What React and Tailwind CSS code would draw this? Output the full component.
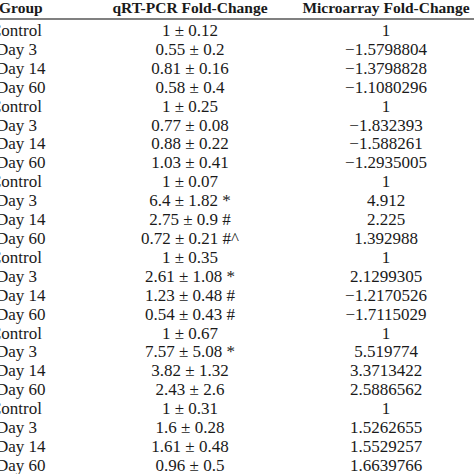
import React from "react";

const rows = [
  ["Control", "1 ± 0.12", "1"],
  ["Day 3", "0.55 ± 0.2", "−1.5798804"],
  ["Day 14", "0.81 ± 0.16", "−1.3798828"],
  ["Day 60", "0.58 ± 0.4", "−1.1080296"],
  ["Control", "1 ± 0.25", "1"],
  ["Day 3", "0.77 ± 0.08", "−1.832393"],
  ["Day 14", "0.88 ± 0.22", "−1.588261"],
  ["Day 60", "1.03 ± 0.41", "−1.2935005"],
  ["Control", "1 ± 0.07", "1"],
  ["Day 3", "6.4 ± 1.82 *", "4.912"],
  ["Day 14", "2.75 ± 0.9 #", "2.225"],
  ["Day 60", "0.72 ± 0.21 #^", "1.392988"],
  ["Control", "1 ± 0.35", "1"],
  ["Day 3", "2.61 ± 1.08 *", "2.1299305"],
  ["Day 14", "1.23 ± 0.48 #", "−1.2170526"],
  ["Day 60", "0.54 ± 0.43 #", "−1.7115029"],
  ["Control", "1 ± 0.67", "1"],
  ["Day 3", "7.57 ± 5.08 *", "5.519774"],
  ["Day 14", "3.82 ± 1.32", "3.3713422"],
  ["Day 60", "2.43 ± 2.6", "2.5886562"],
  ["Control", "1 ± 0.31", "1"],
  ["Day 3", "1.6 ± 0.28", "1.5262655"],
  ["Day 14", "1.61 ± 0.48", "1.5529257"],
  ["Day 60", "0.96 ± 0.5", "1.6639766"],
];

export default function App() {
  return (
    <div
      className="w-[474px] h-[474px] overflow-hidden bg-white text-[#1a1a1a]"
      style={{ fontFamily: '"Liberation Serif", serif' }}
    >
      <div className="ml-[-10px] mt-[-2px] w-[497px]">
        <div className="grid grid-cols-[105px_190px_202px] h-[22px] leading-[20px] text-[15.5px] font-bold border-b-2 border-[#808080]">
          <div className="pl-[9px]">Group</div>
          <div className="text-center">qRT-PCR Fold-Change</div>
          <div className="text-center">Microarray Fold-Change</div>
        </div>
        <div className="pt-[2px] text-[17px]">
          {rows.map((r, i) => (
            <div
              key={i}
              className="grid grid-cols-[105px_190px_202px] leading-[18.9px] whitespace-nowrap"
            >
              <div className={r[0] === "Control" ? "" : "pl-[6px]"}>{r[0]}</div>
              <div className="text-center">{r[1]}</div>
              <div className="text-center">{r[2]}</div>
            </div>
          ))}
        </div>
      </div>
    </div>
  );
}
